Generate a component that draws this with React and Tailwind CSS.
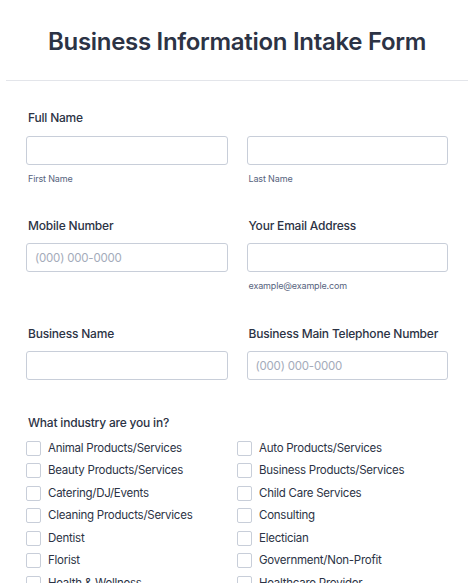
const leftOptions = [
  "Animal Products/Services",
  "Beauty Products/Services",
  "Catering/DJ/Events",
  "Cleaning Products/Services",
  "Dentist",
  "Florist",
  "Health & Wellness",
];

const rightOptions = [
  "Auto Products/Services",
  "Business Products/Services",
  "Child Care Services",
  "Consulting",
  "Electician",
  "Government/Non-Profit",
  "Healthcare Provider",
];

function Label({ children }) {
  return (
    <div className="pl-[2px] text-[12px] font-medium leading-4 tracking-[-0.2px] text-[#2c3345]">
      {children}
    </div>
  );
}

function Input({ placeholder }) {
  return (
    <input
      type="text"
      placeholder={placeholder}
      className="block h-[29px] w-full rounded-[3px] border border-[#c8ced9] bg-white px-[8px] text-[11.5px] tracking-[-0.2px] text-[#2c3345] outline-none placeholder:text-[#a4abba]"
    />
  );
}

function Sublabel({ children }) {
  return (
    <div className="mt-[8px] pl-[2px] text-[9px] leading-3 tracking-[-0.15px] text-[#57647e]">
      {children}
    </div>
  );
}

function Field({ label, placeholder, sublabel }) {
  return (
    <div>
      <Label>{label}</Label>
      <div className="mt-[9px]">
        <Input placeholder={placeholder} />
      </div>
      {sublabel && <Sublabel>{sublabel}</Sublabel>}
    </div>
  );
}

function Checkbox({ label }) {
  return (
    <label className="flex h-[22.5px] items-center gap-[7px]">
      <span className="block h-[15px] w-[15px] shrink-0 rounded-[2px] border border-[#c8ced9] bg-white" />
      <span className="whitespace-nowrap text-[11.5px] tracking-[-0.25px] text-[#2c3345]">{label}</span>
    </label>
  );
}

export default function App() {
  return (
    <div
      className="h-[583px] overflow-hidden bg-white"
      style={{ fontFamily: "Inter, 'Noto Sans', sans-serif" }}
    >
      <div className="px-[6px]">
        <h1 className="pt-[28px] pb-[24px] text-center text-[24px] font-semibold leading-[28px] tracking-[-0.3px] text-[#2c3345]">
          Business Information Intake Form
        </h1>
        <div className="h-px bg-[#e3e5ea]" />
      </div>

      <div className="px-[26px] pt-[29px]">
        <Label>Full Name</Label>
        <div className="mt-[10px] grid grid-cols-2 gap-x-[19px]">
          <div>
            <Input />
            <Sublabel>First Name</Sublabel>
          </div>
          <div>
            <Input />
            <Sublabel>Last Name</Sublabel>
          </div>
        </div>

        <div className="mt-[33px] grid grid-cols-2 gap-x-[19px]">
          <Field label="Mobile Number" placeholder="(000) 000-0000" />
          <Field label="Your Email Address" sublabel="example@example.com" />
        </div>

        <div className="mt-[34px] grid grid-cols-2 gap-x-[19px]">
          <Field label="Business Name" />
          <Field label="Business Main Telephone Number" placeholder="(000) 000-0000" />
        </div>

        <div className="mt-[35px]">
          <Label>What industry are you in?</Label>
        </div>
        <div className="mt-[6px] grid grid-cols-2">
          <div>
            {leftOptions.map((o) => (
              <Checkbox key={o} label={o} />
            ))}
          </div>
          <div>
            {rightOptions.map((o) => (
              <Checkbox key={o} label={o} />
            ))}
          </div>
        </div>
      </div>
    </div>
  );
}
